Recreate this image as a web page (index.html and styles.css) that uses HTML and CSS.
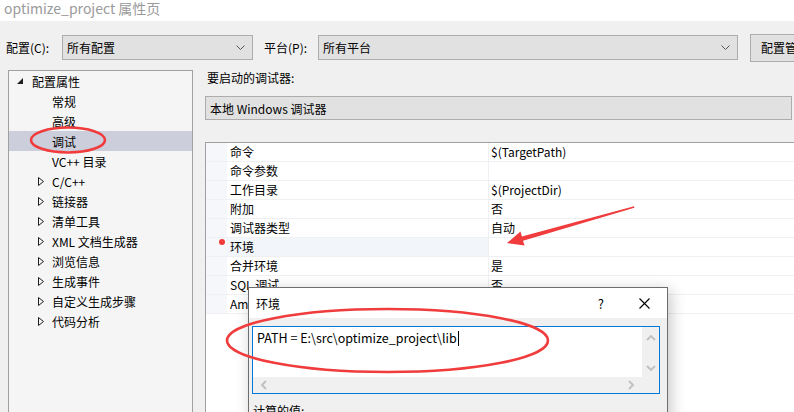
FILE: index.html
```html
<!DOCTYPE html>
<html lang="zh-CN">
<head>
  <meta charset="UTF-8" />
  <title>optimize_project 属性页</title>
  <link rel="stylesheet" href="styles.css">
</head>
<body>

<div class="titlebar">optimize_project 属性页</div>

<div class="toolbar">
  <span class="label cfg-label">配置(C):</span>
  <div class="select cfg">
    <span>所有配置</span>
    <svg class="chev" width="9" height="5" viewBox="0 0 9 5"><polyline points="0.5,0.5 4.5,4.5 8.5,0.5" /></svg>
  </div>
  <span class="label plat-label">平台(P):</span>
  <div class="select plat">
    <span>所有平台</span>
    <svg class="chev" width="9" height="5" viewBox="0 0 9 5"><polyline points="0.5,0.5 4.5,4.5 8.5,0.5" /></svg>
  </div>
  <div class="btn">配置管理器(O)...</div>
</div>

<div class="main">
  <div class="tree">
    <div class="node root">
      <svg class="open" width="6" height="6" viewBox="0 0 6 6"><polygon points="0,6 6,6 6,0" /></svg>
      <span>配置属性</span>
    </div>
    <div class="node leaf">常规</div>
    <div class="node leaf">高级</div>
    <div class="node leaf selected">调试</div>
    <div class="node leaf">VC++ 目录</div>
    <div class="node branch"><svg class="closed" width="6" height="9" viewBox="0 0 6 9"><polygon points="0.5,0.5 5.5,4.5 0.5,8.5" /></svg><span>C/C++</span></div>
    <div class="node branch"><svg class="closed" width="6" height="9" viewBox="0 0 6 9"><polygon points="0.5,0.5 5.5,4.5 0.5,8.5" /></svg><span>链接器</span></div>
    <div class="node branch"><svg class="closed" width="6" height="9" viewBox="0 0 6 9"><polygon points="0.5,0.5 5.5,4.5 0.5,8.5" /></svg><span>清单工具</span></div>
    <div class="node branch"><svg class="closed" width="6" height="9" viewBox="0 0 6 9"><polygon points="0.5,0.5 5.5,4.5 0.5,8.5" /></svg><span>XML 文档生成器</span></div>
    <div class="node branch"><svg class="closed" width="6" height="9" viewBox="0 0 6 9"><polygon points="0.5,0.5 5.5,4.5 0.5,8.5" /></svg><span>浏览信息</span></div>
    <div class="node branch"><svg class="closed" width="6" height="9" viewBox="0 0 6 9"><polygon points="0.5,0.5 5.5,4.5 0.5,8.5" /></svg><span>生成事件</span></div>
    <div class="node branch"><svg class="closed" width="6" height="9" viewBox="0 0 6 9"><polygon points="0.5,0.5 5.5,4.5 0.5,8.5" /></svg><span>自定义生成步骤</span></div>
    <div class="node branch"><svg class="closed" width="6" height="9" viewBox="0 0 6 9"><polygon points="0.5,0.5 5.5,4.5 0.5,8.5" /></svg><span>代码分析</span></div>
  </div>

  <div class="content">
    <div class="caption">要启动的调试器:</div>
    <div class="select debugger"><span>本地 Windows 调试器</span></div>

    <div class="grid">
      <div class="row"><div class="gutter"></div><div class="name">命令</div><div class="value">$(TargetPath)</div></div>
      <div class="row"><div class="gutter"></div><div class="name">命令参数</div><div class="value"></div></div>
      <div class="row"><div class="gutter"></div><div class="name">工作目录</div><div class="value">$(ProjectDir)</div></div>
      <div class="row"><div class="gutter"></div><div class="name">附加</div><div class="value">否</div></div>
      <div class="row"><div class="gutter"></div><div class="name">调试器类型</div><div class="value">自动</div></div>
      <div class="row current"><div class="gutter"><span class="dot"></span></div><div class="name">环境</div><div class="value"></div></div>
      <div class="row"><div class="gutter"></div><div class="name">合并环境</div><div class="value">是</div></div>
      <div class="row"><div class="gutter"></div><div class="name">SQL 调试</div><div class="value">否</div></div>
      <div class="row"><div class="gutter"></div><div class="name">Amp Default Accelerator</div><div class="value">WARP</div></div>
    </div>
  </div>
</div>

<div class="dialog">
  <div class="dlg-title">
    <span class="dlg-name">环境</span>
    <span class="dlg-help">?</span>
    <svg class="dlg-close" width="11" height="11" viewBox="0 0 11 11"><path d="M0.5 0.5 L10.5 10.5 M10.5 0.5 L0.5 10.5" /></svg>
  </div>
  <div class="dlg-body">
    <div class="editbox">
      <div class="edit-main">
        <div class="edit-text">PATH = E:\src\optimize_project\lib<span class="caret"></span></div>
        <div class="vscroll">
          <svg width="10" height="6" viewBox="0 0 10 6"><polyline points="1,5 5,1 9,5" /></svg>
          <svg width="10" height="6" viewBox="0 0 10 6"><polyline points="1,1 5,5 9,1" /></svg>
        </div>
      </div>
      <div class="hscroll">
        <svg width="6" height="10" viewBox="0 0 6 10"><polyline points="5,1 1,5 5,9" /></svg>
        <svg width="6" height="10" viewBox="0 0 6 10"><polyline points="1,1 5,5 1,9" /></svg>
      </div>
    </div>
    <div class="computed">计算的值:</div>
  </div>
</div>

<svg class="marks" width="794" height="412" viewBox="0 0 794 412">
  <ellipse cx="68" cy="140" rx="37" ry="12.5" />
  <ellipse cx="387.5" cy="340.5" rx="160.5" ry="31.5" />
  <polygon class="arrow" points="507,243 520.5,231.6 521.9,236.5 634,206.2 634.4,207.7 523,240.7 524.6,245.6" />
</svg>

</body>
</html>
```

FILE: styles.css
```css
* {
  margin: 0;
  padding: 0;
  box-sizing: border-box;
}
html, body {
  width: 794px;
  height: 412px;
  overflow: hidden;
}
body {
  position: relative;
  background: #f0f0f0;
  font-family: "Noto Sans CJK SC", "Noto Sans", sans-serif;
  font-size: 12px;
  color: #000;
}

.titlebar {
  height: 21px;
  background: #fff;
  padding-left: 4px;
  font-size: 14px;
  line-height: 16px;
  color: #9a9a9a;
}

/* top row */
.toolbar {
  height: 49px;
  display: flex;
  align-items: flex-start;
  padding-top: 14px;
  padding-left: 6px;
}
.toolbar > * { flex: none; }
.label {
  line-height: 25px;
  white-space: nowrap;
}
.cfg-label { width: 56px; }
.plat-label { width: 54px; margin-left: 11px; }

.select {
  height: 25px;
  background: #e1e1e1;
  border: 1px solid #adadad;
  display: flex;
  align-items: center;
  justify-content: space-between;
  padding: 0 7px 0 4px;
  white-space: nowrap;
}
.select.cfg { width: 191px; }
.select.plat { width: 420px; }
.chev {
  fill: none;
  stroke: #555;
  stroke-width: 1;
}
.btn {
  margin-left: 12px;
  margin-top: -1px;
  height: 28px;
  padding: 0 10px;
  background: #e1e1e1;
  border: 1px solid #adadad;
  line-height: 26px;
  white-space: nowrap;
}

/* main area */
.main {
  display: flex;
  padding-left: 8px;
  height: 342px;
}
.tree {
  width: 185px;
  height: 360px;
  flex: none;
  background: #f5f5f5;
  border: 1px solid #a0a0a0;
}
.node {
  height: 20px;
  display: flex;
  align-items: center;
  white-space: nowrap;
}
.node.root { padding-left: 8px; }
.node.root span { margin-left: 9px; }
.node.leaf { padding-left: 43px; }
.node.branch { padding-left: 29px; }
.node.branch span { margin-left: 8px; }
.node.selected { background: #cccedb; }
.open { fill: #1e1e1e; }
.closed {
  fill: none;
  stroke: #1e1e1e;
  stroke-width: 1;
}

.content {
  flex: 1;
  margin-left: 12px;
  display: flex;
  flex-direction: column;
}
.caption {
  line-height: 16px;
  padding-left: 2px;
}
.select.debugger {
  margin-top: 10px;
  height: 24px;
  width: 587px;
}
.grid {
  margin-top: 22px;
  flex: 1;
  background: #fff;
  border-top: 1px solid #a0a0a0;
  border-left: 1px solid #a0a0a0;
  margin-right: -4px;
}
.row {
  display: grid;
  grid-template-columns: 21px 261px 1fr;
  height: 19px;
  border-bottom: 1px solid #eef0f4;
}
.gutter {
  background: #f5f7fb;
  position: relative;
}
.name {
  padding-left: 3px;
  line-height: 18px;
  white-space: nowrap;
  overflow: hidden;
}
.value {
  border-left: 1px solid #eef0f4;
  padding-left: 2px;
  line-height: 18px;
  white-space: nowrap;
}
.row.current .name { background: #f2f5fa; }
.dot {
  position: absolute;
  left: 13px;
  top: 1px;
  width: 6px;
  height: 6px;
  border-radius: 50%;
  background: #f03a3a;
}

/* floating dialog */
.dialog {
  position: absolute;
  left: 248px;
  top: 287px;
  width: 420px;
  height: 140px;
  border: 1px solid #6d6d6d;
  background: #f0f0f0;
  box-shadow: 3px 3px 14px rgba(0, 0, 0, 0.22);
}
.dlg-title {
  height: 30px;
  background: #fff;
  display: flex;
  align-items: center;
  padding-left: 7px;
}
.dlg-name { flex: 1; }
.dlg-help {
  font-size: 13px;
  margin-right: 35px;
}
.dlg-close {
  margin-right: 17px;
  fill: none;
  stroke: #000;
  stroke-width: 1.1;
}
.dlg-body {
  padding: 8px 7px 0 3px;
}
.editbox {
  height: 68px;
  border: 1px solid #0078d7;
  display: flex;
  flex-direction: column;
}
.edit-main {
  display: flex;
  height: 50px;
}
.edit-text {
  flex: 1;
  background: #fff;
  padding: 3px 0 0 4px;
  line-height: 16px;
  font-size: 12.5px;
  white-space: nowrap;
}
.caret {
  display: inline-block;
  width: 1px;
  height: 15px;
  background: #000;
  vertical-align: -3px;
  margin-left: 1px;
}
.vscroll {
  width: 17px;
  display: flex;
  flex-direction: column;
  justify-content: space-between;
  align-items: center;
  padding: 8px 0 6px;
}
.hscroll {
  flex: 1;
  display: flex;
  justify-content: space-between;
  align-items: center;
  padding: 0 25px 0 8px;
}
.vscroll svg, .hscroll svg {
  fill: none;
  stroke: #c2c2c2;
  stroke-width: 2;
}
.computed {
  margin-top: 8px;
  padding-left: 1px;
}

/* hand-drawn annotations */
.marks {
  position: absolute;
  left: 0;
  top: 0;
  pointer-events: none;
}
.marks ellipse {
  fill: none;
  stroke: #f03c3c;
  stroke-width: 2.6;
}
.marks .arrow { fill: #f03c3c; }
```
